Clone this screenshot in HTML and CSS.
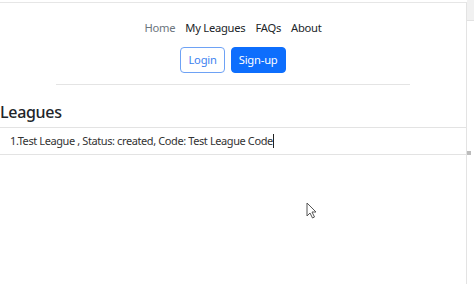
FILE: index.html
```html
<!DOCTYPE html>
<html>
<head>
<meta charset="utf-8">
<link rel="stylesheet" href="styles.css">
</head>
<body>
<div class="frame">
  <header class="header">
    <nav class="nav">
      <a class="nav-link muted">Home</a>
      <a class="nav-link">My Leagues</a>
      <a class="nav-link">FAQs</a>
      <a class="nav-link">About</a>
    </nav>
    <div class="actions">
      <button class="btn btn-outline">Login</button>
      <button class="btn btn-primary">Sign-up</button>
    </div>
    <div class="divider"></div>
  </header>
  <main class="main">
    <h2 class="title">Leagues</h2>
    <ul class="list">
      <li class="item">1.Test League , Status: created, Code: Test League Code<span class="caret"></span></li>
    </ul>
  </main>
  <svg class="pointer" width="12" height="18" viewBox="0 0 12 18"><path d="M1 1 L1 14 L4 11 L6.5 16 L8.5 15 L6 10 L10 10 Z" fill="#fff" stroke="#555" stroke-width="1" stroke-linejoin="round"/></svg>
</div>
<div class="scroll">
  <div class="thumb"></div>
  <div class="arrow"></div>
</div>
</body>
</html>
```
FILE: styles.css
```css
html, body {
  margin: 0;
  padding: 0;
  background: #fff;
  font-family: "Noto Sans", "Open Sans", sans-serif;
  color: #212529;
}
body {
  display: flex;
  width: 474px;
  height: 284px;
  overflow: hidden;
}
.frame {
  position: relative;
  width: 467px;
  margin-top: 2px;
  border-top: 1px solid #e6e6e6;
  border-right: 1px solid #e3e3e3;
  height: 282px;
  box-sizing: border-box;
}
.scroll {
  flex: 1;
  display: flex;
  flex-direction: column;
}
.thumb {
  height: 20px;
  background: #f1f1f1;
  border-bottom: 1px solid #e2e2e2;
}
.arrow {
  margin-top: 130px;
  height: 4px;
  background: #bcbcbc;
  width: 4px;
}
.header {
  display: flex;
  flex-direction: column;
  align-items: center;
  padding-top: 17px;
}
.nav {
  display: flex;
  gap: 10px;
  font-size: 11.2px;
  letter-spacing: -0.25px;
  line-height: 15px;
}
.nav-link {
  color: #212529;
}
.nav-link.muted {
  color: #6c757d;
}
.actions {
  display: flex;
  gap: 6px;
  margin-top: 12px;
}
.btn {
  font-family: inherit;
  font-size: 11.2px;
  letter-spacing: -0.2px;
  height: 26px;
  padding: 0 7px;
  border-radius: 4px;
  line-height: 24px;
}
.btn-outline {
  background: #fff;
  color: #3d82f0;
  border: 1px solid #6ea2f5;
}
.btn-primary {
  background: #0d6efd;
  color: #fff;
  border: 1px solid #0d6efd;
}
.divider {
  width: 354px;
  margin-top: 11px;
  border-top: 1px solid #e4e4e4;
}
.main {
  padding-top: 15px;
}
.title {
  margin: 0;
  font-size: 16px;
  letter-spacing: -0.3px;
  font-weight: 500;
  line-height: 24px;
  color: #212529;
}
.list {
  list-style: none;
  margin: 3px 0 0;
  padding: 0;
}
.item {
  border-top: 1px solid #e3e3e3;
  border-bottom: 1px solid #e3e3e3;
  padding: 5px 10px;
  font-size: 11px;
  letter-spacing: -0.4px;
  line-height: 16px;
  color: #333;
}
.caret {
  display: inline-block;
  width: 1px;
  height: 14px;
  background: #222;
  vertical-align: -3px;
}
.pointer {
  position: absolute;
  left: 306px;
  top: 199px;
}
```
